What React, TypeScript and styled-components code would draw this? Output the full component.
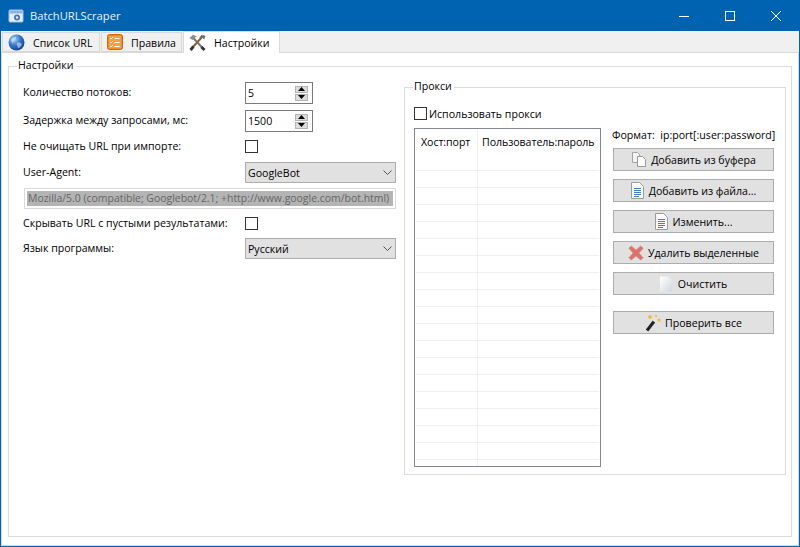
import React from "react";
import styled, { createGlobalStyle } from "styled-components";

const Global = createGlobalStyle`
  html, body { margin: 0; padding: 0; background: #fff; }
  body { font-family: "Open Sans", "Noto Sans", sans-serif; font-size: 10.6px; color: #000; }
  * { box-sizing: border-box; }
`;

const Win = styled.div`
  width: 800px; height: 547px; display: flex; flex-direction: column;
  border: 1px solid #0063b1; border-top: 0; background: #f0f0f0; overflow: hidden;
`;
const TitleBar = styled.div`
  height: 31px; flex: none; background: #0063b1; color: #fff; display: flex; align-items: center;
  padding: 0 1px 0 8px; margin: 0 -1px; font-size: 11.2px;
`;
const TitleText = styled.span`margin-left: 6px; flex: 1; color: #eaf2f9;`;
const WinBtn = styled.div`
  width: 46px; height: 31px; display: flex; align-items: center; justify-content: center;
`;
const TabBar = styled.div`
  height: 21px; flex: none; display: flex; align-items: flex-end; padding-left: 1px; position: relative; z-index: 1;
`;
const Tab = styled.div<{ $w: number; $active?: boolean }>`
  width: ${p => p.$w}px; height: ${p => (p.$active ? 22 : 20)}px;
  margin-bottom: ${p => (p.$active ? -1 : 0)}px;
  background: ${p => (p.$active ? "#fff" : "#f0f0f0")};
  border: 1px solid #d9d9d9; border-bottom: ${p => (p.$active ? "0" : "1px solid #d9d9d9")};
  margin-right: ${p => (p.$active ? 0 : 1)}px;
  display: flex; align-items: center; padding-left: 5px; gap: 8px;
  white-space: nowrap;
`;
const TabLabel = styled.span`margin-top: 1px;`;
const Pane = styled.div`
  flex: 1; background: #fff; border: 1px solid #d9d9d9; padding: 5px 6px 0 6px;
`;
const Group = styled.fieldset<{ $w: number; $h: number }>`
  width: ${p => p.$w}px; height: ${p => p.$h}px; margin: 0; padding: 0; min-width: 0; flex: none;
  border: 1px solid #dcdcdc; display: block;
`;
const Legend = styled.legend`
  margin-left: 8px; padding: 0 2px 0 1px; height: 16px; line-height: 15px;
`;
const Columns = styled.div`
  display: flex; gap: 7px; padding: 5px 0 0 14px;
`;
const FormCol = styled.div`
  width: 374px; flex: none; padding-top: 3px; display: flex; flex-direction: column;
`;
const Row = styled.div<{ $h: number; $mt: number }>`
  height: ${p => p.$h}px; margin-top: ${p => p.$mt}px; display: flex; align-items: center;
`;
const Label = styled.label`width: 222px; flex: none; white-space: nowrap; margin-top: -2px;`;
const Spin = styled.div`
  width: 68px; height: 22px; border: 1px solid #7a7a7a; display: flex; align-items: center;
  padding: 0 0 0 2px;
`;
const SpinValue = styled.span`flex: 1;`;
const SpinBtns = styled.div`
  width: 13px; display: flex; flex-direction: column; gap: 1px; margin-right: 4px;
`;
const SpinBtn = styled.div`
  height: 7px; background: #dcdcdc; border: 1px solid #b4b4b4; display: flex; align-items: center; justify-content: center;
`;
const Check = styled.div`
  width: 13px; height: 13px; border: 1px solid #333; background: #fff; flex: none;
`;
const Combo = styled.div`
  width: 151px; height: 21px; background: #e1e1e1; border: 1px solid #adadad; display: flex; align-items: center;
  justify-content: space-between; padding: 0 3px 0 2px;
`;
const UaField = styled.div`
  width: 372px; margin-left: 1px; height: 21px; border: 1px solid #d9d9d9; padding: 2px;
`;
const UaInner = styled.div`
  height: 15px; background: #b4b4b4; color: #666; font-size: 10.45px; line-height: 14px; padding-left: 1px; white-space: nowrap;
`;
const ProxyBody = styled.div`
  display: flex; gap: 12px; padding: 0 0 0 9px;
`;
const ProxyLeft = styled.div`width: 187px; flex: none;`;
const UseProxy = styled.div`
  height: 13px; margin-top: 12px; display: flex; align-items: center; gap: 2px;
`;
const Table = styled.div`
  margin-top: 8px; width: 187px; height: 339px; border: 1px solid #828790; padding: 1px; overflow: hidden;
`;
const TableRow = styled.div<{ $h: number; $line?: boolean }>`
  height: ${p => p.$h}px; display: grid; grid-template-columns: 62px 1fr;
  border-top: ${p => (p.$line ? "1px solid #f0f0f0" : "0")};
  width: 183px;
`;
const Cell = styled.div`
  padding: 5px 0 0 4px; white-space: nowrap; letter-spacing: -0.05px;
  &:first-child { border-right: 1px solid #f0f0f0; padding-left: 5px; }
`;
const ProxyRight = styled.div`
  width: 162px; flex: none; display: flex; flex-direction: column; margin-top: 33px;
`;
const Format = styled.div`
  height: 15px; line-height: 14px; margin-bottom: 5px; margin-left: -1px; white-space: nowrap;
`;
const Btn = styled.div<{ $mt?: number; $gap?: number }>`
  width: 161px; height: 23px; background: #e1e1e1; border: 1px solid #adadad; flex: none;
  margin-top: ${p => p.$mt ?? 8}px; display: flex; align-items: center; justify-content: center; gap: ${p => p.$gap ?? 4}px;
  white-space: nowrap;
`;

const WinIcon = () => (
  <svg width="16" height="16" viewBox="0 0 16 16">
    <rect x="1" y="2" width="14" height="12" rx="1" fill="#e6edf6" stroke="#a9c0dc" />
    <rect x="1.5" y="2.5" width="13" height="3" fill="#8fb2dc" />
    <circle cx="9" cy="9.5" r="3" fill="#3d75c4" />
    <circle cx="9" cy="9.5" r="1.2" fill="#e8f0fb" />
  </svg>
);
const Globe = () => (
  <svg width="17" height="17" viewBox="0 0 17 17">
    <defs>
      <radialGradient id="gl" cx="35%" cy="30%" r="75%">
        <stop offset="0" stopColor="#a8d4f8" />
        <stop offset=".55" stopColor="#2f73c8" />
        <stop offset="1" stopColor="#173f92" />
      </radialGradient>
    </defs>
    <circle cx="8.5" cy="8.5" r="8" fill="url(#gl)" />
    <path d="M3 5c2-1 3-2 5-2 1 1-1 2-1 3s-2 1-2 3c-1 0-2-2-2-4zM9 9c2-1 4 0 5 1-1 2-2 4-4 4 0-2-2-3-1-5z" fill="#d8e6f5" opacity=".6" />
  </svg>
);
const Rules = () => (
  <svg width="16" height="16" viewBox="0 0 16 16">
    <rect x=".5" y=".5" width="15" height="15" rx="2" fill="#f58a1f" stroke="#c96a10" />
    <rect x="2" y="2" width="12" height="12" fill="#f9a03c" />
    <path d="M3 4l1 1 2-2M3 8l1 1 2-2M3 12l1 1 2-2" stroke="#fff" fill="none" />
    <path d="M7.5 4.5h5M7.5 8.5h5M7.5 12.5h5" stroke="#fff" />
  </svg>
);
const Tools = () => (
  <svg width="17" height="17" viewBox="0 0 17 17">
    <path d="M3.5 3l10 11" stroke="#777" strokeWidth="2" />
    <path d="M13.5 2.5L3.5 13.5" stroke="#8a6238" strokeWidth="2" />
    <path d="M.5 4L4 .8 8 2.5 6 3.5 3.5 6z" fill="#8c8c8c" />
    <path d="M10.5 3.5L12.5 1l4 .8-1.2 3.7-2.3-2-1 1.5z" fill="#6f6f6f" />
    <path d="M12.5 13l3 3" stroke="#333" strokeWidth="2.8" />
    <path d="M4.5 12.5L1.5 16" stroke="#333" strokeWidth="2.8" />
  </svg>
);
const Minimize = () => <svg width="10" height="10"><path d="M0 5.5h10" stroke="#fff" /></svg>;
const Maximize = () => <svg width="10" height="10"><rect x=".5" y=".5" width="9" height="9" fill="none" stroke="#fff" /></svg>;
const CloseI = () => <svg width="10" height="10"><path d="M0 0l10 10M10 0L0 10" stroke="#fff" strokeWidth="1" /></svg>;
const Up = () => <svg width="7" height="4"><path d="M3.5 0L7 4H0z" fill="#000" /></svg>;
const Down = () => <svg width="7" height="4"><path d="M0 0h7L3.5 4z" fill="#000" /></svg>;
const Chevron = () => <svg width="9" height="5"><path d="M.5.5l4 4 4-4" fill="none" stroke="#555" /></svg>;
const Copy = () => (
  <svg width="16" height="17" viewBox="0 0 16 17">
    <path d="M1.5 1.5h5l2 2v8h-7z" fill="#f4f4f4" stroke="#a5a5a5" />
    <path d="M6.5 5.5h5l3 3v7h-8z" fill="#fbfbfb" stroke="#999" />
  </svg>
);
const Doc = () => (
  <svg width="13" height="17" viewBox="0 0 13 17">
    <path d="M.5.5h8l4 4v12H.5z" fill="#fbfbfb" stroke="#9c9c9c" />
    <path d="M3 6.5h7M3 8.5h7M3 10.5h7M3 12.5h7M3 14.5h5" stroke="#3f7fc6" />
  </svg>
);
const Del = () => (
  <svg width="16" height="16" viewBox="0 0 17 17">
    <path d="M3.5 1L8.5 5.5 13.5 1 16 3.5 11.5 8.5 16 13.5 13.5 16 8.5 11.5 3.5 16 1 13.5 5.5 8.5 1 3.5z" fill="#e0706a" stroke="#ce8f8b" />
  </svg>
);
const Blank = () => (
  <svg width="12" height="16" viewBox="0 0 13 16">
    <defs>
      <linearGradient id="bl" x1="0" y1="0" x2="1" y2="1">
        <stop offset="0" stopColor="#fff" />
        <stop offset="1" stopColor="#d2d8df" />
      </linearGradient>
    </defs>
    <path d="M0 0h9l4 4v12H0z" fill="url(#bl)" />
  </svg>
);
const Wand = () => (
  <svg width="16" height="18" viewBox="0 0 16 18">
    <path d="M2 16.5L9 7.5" stroke="#222" strokeWidth="3" />
    <path d="M9 5.5l1 2" stroke="#e9e9e9" strokeWidth="2" />
    <circle cx="5" cy="3" r="1.8" fill="#f3b62e" />
    <circle cx="11" cy="2" r="1" fill="#f3b62e" />
    <circle cx="14" cy="6" r="1.5" fill="#f3b62e" />
  </svg>
);

const gridRows = Array.from({ length: 18 });

export default function App() {
  return (
    <Win>
      <Global />
      <TitleBar>
        <WinIcon />
        <TitleText>BatchURLScraper</TitleText>
        <WinBtn><Minimize /></WinBtn>
        <WinBtn><Maximize /></WinBtn>
        <WinBtn><CloseI /></WinBtn>
      </TitleBar>
      <TabBar>
        <Tab $w={98}><Globe /><TabLabel>Список URL</TabLabel></Tab>
        <Tab $w={81}><Rules /><TabLabel>Правила</TabLabel></Tab>
        <Tab $w={97} $active><Tools /><span>Настройки</span></Tab>
      </TabBar>
      <Pane>
        <Group $w={784} $h={479}>
          <Legend>Настройки</Legend>
          <Columns>
            <FormCol>
              <Row $h={22} $mt={0}>
                <Label>Количество потоков:</Label>
                <Spin><SpinValue>5</SpinValue><SpinBtns><SpinBtn><Up /></SpinBtn><SpinBtn><Down /></SpinBtn></SpinBtns></Spin>
              </Row>
              <Row $h={22} $mt={6}>
                <Label>Задержка между запросами, мс:</Label>
                <Spin><SpinValue>1500</SpinValue><SpinBtns><SpinBtn><Up /></SpinBtn><SpinBtn><Down /></SpinBtn></SpinBtns></Spin>
              </Row>
              <Row $h={13} $mt={8}>
                <Label>Не очищать URL при импорте:</Label>
                <Check />
              </Row>
              <Row $h={21} $mt={9}>
                <Label>User-Agent:</Label>
                <Combo><span>GoogleBot</span><Chevron /></Combo>
              </Row>
              <Row $h={21} $mt={5}>
                <UaField><UaInner>Mozilla/5.0 (compatible; Googlebot/2.1; +http://www.google.com/bot.html)</UaInner></UaField>
              </Row>
              <Row $h={13} $mt={8}>
                <Label>Скрывать URL с пустыми результатами:</Label>
                <Check />
              </Row>
              <Row $h={21} $mt={8}>
                <Label>Язык программы:</Label>
                <Combo><span>Русский</span><Chevron /></Combo>
              </Row>
            </FormCol>
            <Group $w={382} $h={396}>
              <Legend>Прокси</Legend>
              <ProxyBody>
                <ProxyLeft>
                  <UseProxy><Check /><span>Использовать прокси</span></UseProxy>
                  <Table>
                    <TableRow $h={40}>
                      <Cell>Хост:порт</Cell>
                      <Cell>Пользователь:пароль</Cell>
                    </TableRow>
                    {gridRows.map((_, i) => (
                      <TableRow key={i} $h={17} $line><Cell /><Cell /></TableRow>
                    ))}
                  </Table>
                </ProxyLeft>
                <ProxyRight>
                  <Format>Формат:&nbsp; ip:port[:user:password]</Format>
                  <Btn $mt={0}><Copy /><span>Добавить из буфера</span></Btn>
                  <Btn $gap={5}><Doc /><span>Добавить из файла...</span></Btn>
                  <Btn $gap={5}><Doc /><span>Изменить...</span></Btn>
                  <Btn><Del /><span>Удалить выделенные</span></Btn>
                  <Btn $gap={6}><Blank /><span>Очистить</span></Btn>
                  <Btn $mt={16}><Wand /><span>Проверить все</span></Btn>
                </ProxyRight>
              </ProxyBody>
            </Group>
          </Columns>
        </Group>
      </Pane>
    </Win>
  );
}
